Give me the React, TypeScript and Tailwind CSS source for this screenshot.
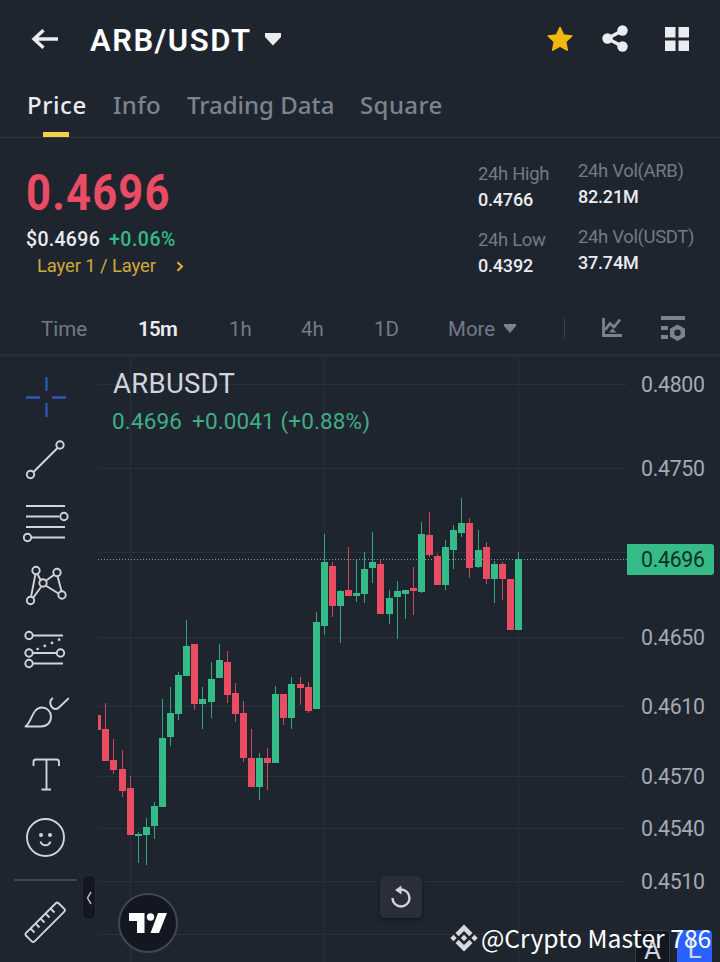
import { FC, ReactNode } from "react";

interface Candle {
  x: number
  high: number
  top: number
  bottom: number
  low: number
  up: boolean
}

const UP = "#34bb87";
const DOWN = "#ea4c63";

// x, high, body top, body bottom, low, up
const rows: [number, number, number, number, number, number][] = [
  [105, 703, 729, 761, 761, 0],
  [113, 739, 760, 770, 774, 0],
  [122, 750, 769, 791, 797, 0],
  [130, 776, 788, 835, 835, 0],
  [138, 832, 834, 836, 863, 1],
  [146, 818, 827, 835, 865, 1],
  [154, 802, 806, 826, 839, 1],
  [162, 699, 738, 807, 807, 1],
  [170, 687, 713, 737, 746, 1],
  [178, 672, 675, 714, 720, 1],
  [186, 620, 646, 676, 676, 1],
  [194, 644, 644, 704, 710, 0],
  [202, 687, 699, 704, 729, 1],
  [211, 662, 679, 702, 718, 1],
  [219, 644, 660, 678, 678, 1],
  [227, 651, 662, 695, 703, 0],
  [235, 683, 693, 714, 722, 0],
  [243, 701, 713, 758, 762, 0],
  [251, 729, 758, 787, 787, 0],
  [259, 753, 758, 787, 800, 1],
  [267, 748, 758, 763, 790, 0],
  [275, 686, 694, 763, 763, 1],
  [283, 694, 694, 718, 725, 0],
  [291, 677, 684, 718, 729, 1],
  [300, 677, 684, 688, 705, 0],
  [308, 682, 687, 711, 713, 0],
  [316, 612, 622, 709, 709, 1],
  [324, 534, 562, 626, 635, 1],
  [332, 562, 566, 606, 617, 0],
  [340, 590, 591, 606, 643, 1],
  [348, 547, 590, 596, 596, 0],
  [356, 560, 593, 596, 602, 1],
  [364, 552, 569, 594, 603, 1],
  [372, 532, 562, 568, 583, 1],
  [380, 560, 564, 614, 614, 0],
  [389, 590, 598, 614, 624, 1],
  [397, 581, 591, 597, 639, 1],
  [405, 590, 590, 594, 619, 1],
  [413, 567, 588, 591, 615, 0],
  [421, 522, 534, 592, 593, 1],
  [429, 512, 535, 555, 557, 0],
  [437, 554, 556, 585, 585, 0],
  [445, 540, 547, 585, 590, 1],
  [453, 525, 530, 550, 569, 1],
  [461, 498, 523, 533, 537, 1],
  [469, 518, 523, 568, 578, 0],
  [478, 530, 550, 567, 568, 1],
  [486, 542, 547, 579, 584, 0],
  [494, 561, 564, 579, 603, 1],
  [502, 562, 564, 579, 600, 0],
  [510, 579, 579, 630, 630, 0],
  [518, 552, 559, 630, 630, 1],
];

const candles: Candle[] = rows.map(([x, high, top, bottom, low, up]) => ({
  x, high, top, bottom, low, up: up === 1,
}));

const gridY = [384, 468, 552, 637, 706, 776, 828, 881, 934];
const gridX = [130, 324, 518];

const prices = [
  { label: "0.4800", y: 384 },
  { label: "0.4750", y: 468 },
  { label: "0.4650", y: 637 },
  { label: "0.4610", y: 706 },
  { label: "0.4570", y: 776 },
  { label: "0.4540", y: 828 },
  { label: "0.4510", y: 881 },
];

const Header: FC = () => (
  <header className="flex h-[78px] items-center pl-[31px] pr-[31px]">
    <svg width="27" height="20" viewBox="0 0 27 20" fill="none" stroke="#eaecef" strokeWidth="3.400">
      <path d="M27 10H3M12.500 1.200L3 10l9.500 8.800" />
    </svg>
    <h1 className="ml-[32px] mt-[4px] w-[160px] whitespace-nowrap text-[31px] leading-[40px] font-semibold tracking-[1.500px] text-white">ARB/USDT</h1>
    <svg className="ml-[14px]" width="17" height="14" viewBox="0 0 17 14">
      <path d="M1 1h16v4L9 13.500 1 5z" fill="#eaecef" />
    </svg>
    <div className="ml-auto flex items-center">
      <svg width="28" height="28" viewBox="0 0 28 28">
        <path d="M14 2.500l3.500 7.400 8.300 1-6.100 5.800 1.600 8.400-7.300-4-7.300 4 1.600-8.400-6.100-5.800 8.300-1z" fill="#f0b90b" stroke="#f0b90b" strokeWidth="1.500" strokeLinejoin="round" />
      </svg>
      <svg className="ml-[28px]" width="26" height="28" viewBox="0 0 26 28" fill="#eaecef">
        <path d="M20.500 5.500L5.500 13.500l15 8" fill="none" stroke="#eaecef" strokeWidth="3.400" />
        <circle cx="20.500" cy="5.500" r="5.200" />
        <circle cx="5.500" cy="13.500" r="5.200" />
        <circle cx="20.500" cy="21.500" r="5.200" />
      </svg>
      <svg className="ml-[37px] mb-[1px]" width="24" height="24" viewBox="0 0 24 24" fill="#eaecef">
        <path d="M0 0h10.500v10.500H0zM13.500 0H24v10.500H13.500zM0 13.500h10.500V24H0zM13.500 13.500H24V24H13.500z" />
      </svg>
    </div>
  </header>
);

const Tabs: FC = () => (
  <nav className="flex h-[60px] border-b border-[#333842] pl-[27px] font-['Noto_Sans',sans-serif] text-[24px] leading-[34px] font-medium whitespace-nowrap text-[#7d828d]">
    <div className="flex w-[86px] flex-col text-[#eaecef]">
      <span className="mt-[10px] tracking-[0.600px]">Price</span>
      <span className="mt-[10px] ml-[16px] h-[5px] w-[26px] bg-[#f3d04d]" />
    </div>
    <span className="mt-[10px] w-[74px] tracking-[0.300px]">Info</span>
    <span className="mt-[10px] w-[173px]">Trading Data</span>
    <span className="mt-[10px] tracking-[0.400px]">Square</span>
  </nav>
);

const Stat: FC<{ name: string; value: string }> = ({ name, value }) => (
  <div className="h-[66px] whitespace-nowrap">
    <div className="h-[26px] text-[18.500px] leading-[27px] tracking-[-0.350px] text-[#737985]">{name}</div>
    <div className="text-[18px] leading-[26px] font-medium tracking-[-0.200px] text-[#eaecef]">{value}</div>
  </div>
);

const Summary: FC = () => (
  <section className="flex h-[166px]">
    <div className="w-[478px] pt-[27px] pl-[26px] whitespace-nowrap">
      <div className="h-[61px] w-[180px] origin-left scale-x-[0.870] text-[50px] leading-[56px] font-bold tracking-[1.400px] text-[#ea4c63]">0.4696</div>
      <div className="flex h-[27px] items-center gap-[9px] text-[19.500px] font-medium">
        <span className="w-[74px] tracking-[0.300px] text-[#eaecef]">$0.4696</span>
        <span className="tracking-[0.500px] text-[#34bb87]">+0.06%</span>
      </div>
      <div className="flex h-[27px] items-center pl-[11px] text-[18.500px] tracking-[-0.150px] text-[#d0a83a]">
        <span className="w-[139px]">Layer 1 / Layer</span>
        <svg width="8" height="11" viewBox="0 0 8 11" fill="none" stroke="#e5b42f" strokeWidth="2">
          <path d="M1.500 1.200L6 5.500 1.500 9.800" />
        </svg>
      </div>
    </div>
    <div className="w-[100px] pt-[23px]">
      <Stat name="24h High" value="0.4766" />
      <Stat name="24h Low" value="0.4392" />
    </div>
    <div className="pt-[20px]">
      <Stat name="24h Vol(ARB)" value="82.21M" />
      <Stat name="24h Vol(USDT)" value="37.74M" />
    </div>
  </section>
);

const Intervals: FC = () => (
  <div className="flex h-[50px] items-center pl-[41px] text-[20.500px] whitespace-nowrap text-[#737985]">
    <span className="w-[97px]">Time</span>
    <span className="w-[91px] font-semibold tracking-[-0.700px] text-[#eaecef]">15m</span>
    <span className="w-[72px]">1h</span>
    <span className="w-[73px]">4h</span>
    <span className="w-[74px]">1D</span>
    <span className="w-[56px]">More</span>
    <svg className="mb-[2px]" width="12" height="9" viewBox="0 0 12 9"><path d="M0 0h12v2L6 9 0 2z" fill="#7d828d" /></svg>
    <span className="mb-[2px] ml-[48px] h-[21px] w-px bg-[#3a404b]" />
    <svg className="ml-[36px] mb-[3px]" width="21" height="21" viewBox="0 0 21 21" fill="none" stroke="#7d828d" strokeWidth="2.800">
      <path d="M2.500 1v17.500H21M4 13l5-6.500 4 3.500 6-7.500" />
      <path d="M8 15.500l3.500-4 4 4z" fill="#7d828d" stroke="none" />
    </svg>
    <svg className="mb-[2px] ml-[38px]" width="27" height="27" viewBox="0 0 27 27" fill="#7d828d">
      <path d="M1 1h24v4H1zM1 11h7v4H1zM1 20h7v4H1z" />
      <path fillRule="evenodd" d="M17.500 9.500l7.500 4.200v8.100L17.500 26l-7.500-4.200v-8.100zM17.500 14.500a3.200 3.200 0 1 0 0 6.400 3.200 3.200 0 0 0 0-6.400z" />
    </svg>
  </div>
);

const Tool: FC<{ children: ReactNode }> = ({ children }) => (
  <svg className="shrink-0" width="46" height="63" viewBox="0 0 46 63" fill="none" stroke="#d1d4dc" strokeWidth="1.900">
    {children}
  </svg>
);

// left drawing toolbar, every tool sits in a 46x63 cell
const DrawingTools: FC = () => (
  <aside className="flex w-[98px] shrink-0 flex-col pt-[9px] pl-[23px]">
    <Tool>
      <path d="M23.500 11v14M23.500 37v14M3 31.500h14M29 31.500h14" stroke="#2f57b8" strokeWidth="2.300" />
    </Tool>
    <Tool>
      <path d="M10.500 43L34.500 19" />
      <circle cx="7.500" cy="45.500" r="3.700" /><circle cx="37" cy="16" r="3.700" />
    </Tool>
    <Tool>
      <path d="M3 14h39M3 24.500h33M3 35h39M8 45.500h34" />
      <circle cx="41" cy="24.500" r="3.700" /><circle cx="4.500" cy="45.500" r="3.700" />
    </Tool>
    <Tool>
      <path d="M8 42L12.500 19M14.500 19l3.500 7M10 43l8-11M22.500 26l9-6.500M22.500 30.500l13 8M34.500 21l4 15" />
      <circle cx="13" cy="15.500" r="3.700" /><circle cx="34" cy="17.500" r="3.700" /><circle cx="20" cy="28" r="3.700" /><circle cx="7.500" cy="45.500" r="3.700" /><circle cx="39" cy="40" r="3.700" />
    </Tool>
    <Tool>
      <path d="M10 17.500h30M10 35h23M10 45.500h30" />
      <circle cx="6" cy="17.500" r="3.700" /><circle cx="6" cy="35" r="3.700" /><circle cx="37.500" cy="35" r="3.700" /><circle cx="6" cy="45.500" r="3.700" />
      <path d="M13.500 31.500L40 20" strokeWidth="2.400" strokeDasharray="2.500 5.300" />
    </Tool>
    <Tool>
      <path d="M2.500 45.500C9 41 9 26.500 19 26.500c5 0 9 4 9 9 0 6-4 10-10 10z" strokeLinejoin="round" />
      <path d="M30 17c-5 3-2.500 11 3 11 2 0 3-1.500 4-2.500l9-8.500" />
    </Tool>
    <Tool>
      <path d="M10.500 22v-4q0-2.500 2.500-2.500h20.500q2.500 0 2.500 2.500v4M23.500 15.500v30M18.500 45.500h9.500" />
    </Tool>
    <Tool>
      <circle cx="22.500" cy="30.500" r="18.500" />
      <path d="M17.500 34.500c1.500 5 8.500 5 10 0" />
      <circle cx="18" cy="28" r="2" fill="#d1d4dc" stroke="none" /><circle cx="27" cy="28" r="2" fill="#d1d4dc" stroke="none" />
    </Tool>
    <div className="mt-[9px] -ml-[9px] h-[2px] w-[63px] shrink-0 bg-[#434651]" />
    <svg className="mt-[20px] shrink-0" width="46" height="46" viewBox="0 0 46 46" fill="none" stroke="#d1d4dc" strokeWidth="1.900">
      <rect x="-1.500" y="-6" width="46" height="12" rx="2" transform="translate(7 36.500) rotate(-45)" />
      <path d="M7.500 27.500l4 4M12.500 22.500l4 4M17.500 17.500l4 4M22.500 12.500l4 4M27.500 7.500l4 4" />
    </svg>
  </aside>
);

// coordinates inside the chart are the page's own, shifted by the viewBox
const Chart: FC = () => (
  <svg className="block shrink-0" width="622" height="605" viewBox="98 357 622 605">
    <g stroke="#2a2f39">
      {gridY.map((y) => <path key={y} d={`M98 ${y + 0.5}H627`} />)}
      {gridX.map((x) => <path key={x} d={`M${x + 0.5} 357V962`} />)}
    </g>
    <path d="M98 559.500H627" stroke="#6fa58f" strokeDasharray="1 2" />
    <path d="M98 715h3v15h-3z" fill={DOWN} />
    {candles.map((c) => (
      <g key={c.x} fill={c.up ? UP : DOWN}>
        <rect x={c.x} y={c.high} width="1" height={c.low - c.high} opacity="0.850" />
        <rect x={c.x - 3} y={c.top} width="7" height={c.bottom - c.top} />
      </g>
    ))}
    <path d="M627 544h84q3 0 3 3v25q0 3-3 3h-84z" fill={UP} />
    <g fontSize="21.300" fill="#a5a9b3">
      {prices.map((p) => <text key={p.label} x="641" y={p.y + 8} textLength="64">{p.label}</text>)}
      <text x="641" y="567" textLength="64" fill="#12301f">0.4696</text>
    </g>
    <text x="113" y="393" fontSize="27.500" textLength="122" fill="#d1d4dc">ARBUSDT</text>
    <g fontSize="22.500" fill="#3fae83">
      <text x="112" y="429" textLength="70">0.4696</text>
      <text x="192" y="429" textLength="178">+0.0041 (+0.88%)</text>
    </g>
  </svg>
);

const App: FC = () => {
  return (
    <div className="relative h-[962px] w-[720px] overflow-hidden bg-[#1f252f] font-[Roboto,sans-serif]">
      <Header />
      <Tabs />
      <Summary />
      <Intervals />
      <div className="h-[3px] bg-[#282c36]" />
      <main className="flex h-[605px]">
        <DrawingTools />
        <Chart />
      </main>

      {/* floating controls over the chart */}
      <div className="absolute top-[875px] left-[82px] flex h-[45px] w-[14px] items-center justify-center rounded-[6px] border border-[#262a35] bg-[#131722]">
        <svg width="6" height="14" viewBox="0 0 6 14" fill="none" stroke="#b2b5be" strokeWidth="1.500"><path d="M5 1L1.500 7 5 13" /></svg>
      </div>
      <div className="absolute top-[893px] left-[118px] flex h-[60px] w-[60px] items-center justify-center rounded-full border-2 border-[#434651] bg-[#131722]">
        <svg width="38" height="20" viewBox="0 0 38 20" fill="#ffffff">
          <path d="M0 0h15.500v20H8V8H0zM29 0h9l-8 20h-8.500z" /><circle cx="21.500" cy="4" r="3.700" />
        </svg>
      </div>
      <div className="absolute top-[876px] left-[380px] flex h-[42px] w-[42px] items-center justify-center rounded-[5px] bg-[#2a2e39] shadow-[0_2px_4px_#12161f]">
        <svg width="22" height="24" viewBox="0 0 22 24" fill="none" stroke="#d1d4dc" strokeWidth="2.400">
          <path d="M2.500 13a8.500 8.500 0 1 0 8.500-8.500H9" />
          <path d="M5 5l6.500-4.500v9z" fill="#d1d4dc" stroke="none" />
        </svg>
      </div>
      <div className="absolute top-[930px] left-[635px] flex h-[32px] gap-[7px] text-[26px] leading-[38px]">
        <span className="h-[40px] w-[35px] rounded-[4px] border border-[#363a45] bg-[#131722] text-center text-[#d1d4dc]">A</span>
        <span className="h-[40px] w-[35px] rounded-[4px] bg-[#2962ff] text-center text-[#d1d4dc]">L</span>
      </div>
      <div className="absolute top-[919px] left-[450px] flex items-center whitespace-nowrap text-white">
        <svg className="mt-[1px]" width="28" height="28" viewBox="0 0 28 28" fill="#d9dadb">
          <path d="M14 0.500l8.500 8.500-3.200 3.200L14 6.900l-5.300 5.300L5.500 9zM14 27.500l8.500-8.500-3.200-3.200L14 21.100l-5.300-5.300L5.500 19zM3.500 10.800L6.700 14l-3.200 3.200L0.300 14zM24.500 10.800l3.200 3.200-3.200 3.200-3.200-3.200zM14 10.800l3.200 3.200-3.200 3.200-3.200-3.200z" />
        </svg>
        <span className="ml-[3px] font-['Noto_Sans_CJK_SC',sans-serif] text-[24.700px] leading-[36px]">@Crypto Master 786</span>
      </div>
    </div>
  )
}

export default App
